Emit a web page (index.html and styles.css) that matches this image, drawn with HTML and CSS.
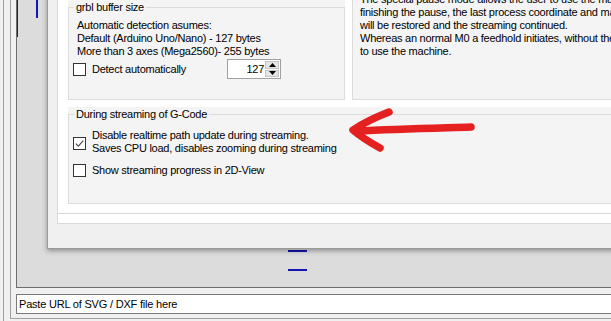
FILE: index.html
```html
<!DOCTYPE html>
<html lang="en">
  <head>
    <meta charset="UTF-8" />
    <title>GRBL Plotter - Setup</title>
    <link rel="stylesheet" href="styles.css">
  </head>
  <body>
    <div class="window">
      <div class="rail"></div>
      <div class="frame">
        <div class="canvas">
          <span class="trace trace-left"></span>
          <span class="trace trace-top"></span>
          <span class="trace trace-dash1"></span>
          <span class="trace trace-dash2"></span>

          <div class="dialog">
            <div class="tabs">
              <div class="tab-page">
                <div class="group-row">
                  <div class="group buffer">
                    <fieldset>
                      <legend>grbl buffer size</legend>
                      <p class="note">Automatic detection asumes:<br>Default (Arduino Uno/Nano) - 127 bytes<br>More than 3 axes (Mega2560)- 255 bytes</p>
                      <div class="check-row">
                        <label class="check detect"><span class="box"></span>Detect automatically</label>
                        <div class="spin">
                          <span class="spin-value">127</span>
                          <span class="spin-btns">
                            <span class="spin-btn"><svg width="7" height="4" viewBox="0 0 7 4"><path d="M0 4 L3.5 0 L7 4 Z" fill="#000"/></svg></span>
                            <span class="spin-btn"><svg width="7" height="4" viewBox="0 0 7 4"><path d="M0 0 L3.5 4 L7 0 Z" fill="#000"/></svg></span>
                          </span>
                        </div>
                      </div>
                    </fieldset>
                  </div>
                  <div class="group pause">
                    <fieldset>
                      <legend>Special pause (M0)</legend>
                      <p class="note">The special pause mode allows the user to use the machine. After<br>finishing the pause, the last process coordinate and machine state<br>will be restored and the streaming continued.<br>Whereas an normal M0 a feedhold initiates, without the possibility<br>to use the machine.</p>
                    </fieldset>
                  </div>
                </div>

                <div class="group streaming">
                  <fieldset>
                    <legend>During streaming of G-Code</legend>
                    <label class="check multi">
                      <span class="box">
                        <svg width="11" height="11" viewBox="0 0 11 11"><path d="M1.8 5.6 L4.3 8.1 L9.3 2.6" fill="none" stroke="#444" stroke-width="1.1"/></svg>
                      </span>
                      <span>Disable realtime path update during streaming.<br>Saves CPU load, disables zooming during streaming</span>
                    </label>
                    <label class="check progress"><span class="box"></span>Show streaming progress in 2D-View</label>
                  </fieldset>
                </div>
              </div>
            </div>
          </div>
        </div>
        <div class="url-bar">
          <input class="url" type="text" value="Paste URL of SVG / DXF file here">
        </div>
      </div>
    </div>

    <svg class="arrow" width="611" height="321" viewBox="0 0 611 321">
      <path d="M471 127 C440 128 400 129 356 131" />
      <path d="M389 112 C376 117 362 124 353 130 C361 137 371 143 380 148" />
    </svg>
  </body>
</html>
```

FILE: styles.css
```css
* {
  margin: 0;
  padding: 0;
  box-sizing: border-box;
}
html,
body {
  overflow: hidden;
}
body {
  height: 321px;
  position: relative;
  background: #f0f0f0;
  color: #000;
  font: 11px/13px "Liberation Sans", Arial, sans-serif;
  letter-spacing: -0.25px;
}
.window {
  display: flex;
  width: 700px;
  height: 321px;
}
.rail {
  width: 7px;
  margin-left: 3px;
  border-left: 1px solid #a0a0a0;
}
.frame {
  flex: 1;
  height: 319px;
  display: flex;
  flex-direction: column;
  padding-left: 5px;
  border-left: 1px solid #a0a0a0;
  border-bottom: 1px solid #a0a0a0;
}
.canvas {
  position: relative;
  height: 288px;
  background: #dcdcdc;
  border-left: 1px solid #6d6d6d;
  border-bottom: 1px solid #6d6d6d;
}
.trace {
  position: absolute;
  background: #1414b0;
}
.trace-left {
  left: 0;
  top: 0;
  width: 1px;
  height: 37px;
}
.trace-top {
  left: 19px;
  top: 0;
  width: 2px;
  height: 18px;
}
.trace-dash1 {
  left: 271px;
  top: 250px;
  width: 19px;
  height: 2px;
}
.trace-dash2 {
  left: 271px;
  top: 269px;
  width: 19px;
  height: 2px;
}

/* setup window lying over the drawing */
.dialog {
  position: absolute;
  left: 30px;
  top: -41px;
  width: 660px;
  height: 290px;
  padding: 10px 0 0 9px;
  background: #f0f0f0;
  border: 1px solid #9a9a9a;
  box-shadow: 0 2px 5px rgba(0, 0, 0, 0.35);
}
.tabs {
  height: 254px;
  padding-top: 29px;
  background: #fff;
  border: 1px solid #d9d9d9;
}
.tab-page {
  height: 214px;
  padding-left: 10px;
  border-bottom: 1px solid #d9d9d9;
}
.group-row {
  display: flex;
  align-items: flex-end;
  gap: 7px;
  height: 100px;
}
.group {
  background: #f4f4f4;
}
.group fieldset {
  height: 100%;
  padding: 0 5px;
  border: 1px solid #dcdcdc;
}
.group legend {
  padding: 0 2px;
  line-height: 14px;
}
.buffer {
  width: 277px;
  height: 100px;
}
.buffer .note {
  margin-top: 5px;
  padding-left: 3px;
}
.pause {
  flex: 1;
  height: 130px;
  white-space: nowrap;
  overflow: hidden;
}
.pause .note {
  margin-top: 9px;
  padding-left: 2px;
}
.check-row {
  display: flex;
  align-items: center;
  height: 20px;
  margin-top: 1px;
}
.check {
  display: flex;
  align-items: center;
  margin-left: -1px;
}
.box {
  flex: none;
  display: flex;
  align-items: center;
  justify-content: center;
  width: 13px;
  height: 13px;
  margin-right: 6px;
  background: #fff;
  border: 1px solid #333;
}
.detect {
  width: 154px;
}
.spin {
  display: flex;
  width: 54px;
  height: 20px;
  background: #fff;
  border: 1px solid #a0a0a0;
}
.spin-value {
  flex: 1;
  padding-right: 1px;
  text-align: right;
  line-height: 18px;
}
.spin-btns {
  display: flex;
  flex-direction: column;
  gap: 1px;
  width: 15px;
  padding: 1px 1px 1px 0;
}
.spin-btn {
  flex: 1;
  display: flex;
  align-items: center;
  justify-content: center;
  background: #e5e5e5;
  border: 1px solid #c4c4c4;
}
.streaming {
  height: 97px;
  margin-top: 7px;
  width: 720px;
}
.multi {
  align-items: flex-start;
  margin-top: 8px;
}
.multi .box {
  margin-top: 8px;
}
.progress {
  margin-top: 9px;
}
.url-bar {
  padding-top: 6px;
}
.url {
  display: block;
  width: 100%;
  height: 20px;
  padding: 0 2px;
  border: 1px solid #7a7a7a;
  background: #fff;
  color: #000;
  font: inherit;
  letter-spacing: -0.2px;
  outline: none;
}
.arrow {
  position: absolute;
  left: 0;
  top: 0;
  pointer-events: none;
}
.arrow path {
  fill: none;
  stroke: #e42020;
  stroke-width: 7.5;
  stroke-linecap: round;
  stroke-linejoin: round;
}
```
